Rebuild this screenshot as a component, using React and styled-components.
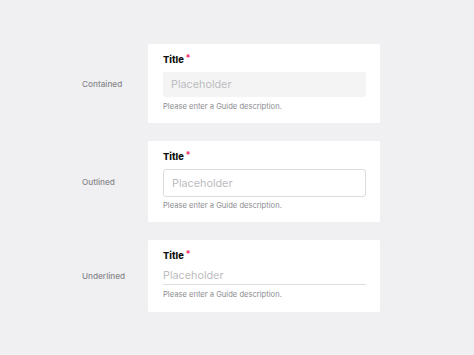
import React from "react";
import styled, { createGlobalStyle, css } from "styled-components";

const Global = createGlobalStyle`
  html, body { margin: 0; padding: 0; background: #f0f0f2; }
  body { font-family: Inter, "Noto Sans", "Liberation Sans", sans-serif; }
  * { box-sizing: border-box; }
`;

const Page = styled.div`
  width: 474px;
  height: 355px;
  padding: 44px 0 0 82px;
  display: flex;
  flex-direction: column;
  gap: 18px;
`;

const Row = styled.div`
  display: grid;
  grid-template-columns: 66px 232px;
  align-items: center;
`;

const Label = styled.div`
  font-size: 8.2px;
  font-weight: 500;
  color: #88888c;
  line-height: 12px;
`;

const Card = styled.div`
  background: #fff;
  border-radius: 2px;
  padding: 10px 14px ${(p) => (p.$variant === "underlined" ? 12 : 11)}px 15px;
  display: flex;
  flex-direction: column;
`;

const Title = styled.div`
  font-size: 9.4px;
  font-weight: 800;
  color: #111;
  line-height: 12px;
  display: flex;
  align-items: flex-start;
`;

const Star = styled.span`
  color: #f2386e;
  font-size: 9px;
  line-height: 9px;
  margin-left: 1.5px;
  margin-top: -1px;
`;

const Input = styled.div`
  margin-top: ${(p) => (p.$variant === "underlined" ? 4 : 6)}px;
  display: flex;
  align-items: center;
  font-size: 10.8px;
  color: #bcbcbf;
  ${(p) =>
    p.$variant === "contained" &&
    css`
      height: 25px;
      padding-left: 8px;
      background: #f4f4f5;
      border-radius: 2px;
    `}
  ${(p) =>
    p.$variant === "outlined" &&
    css`
      height: 28px;
      padding-left: 8px;
      border: 1px solid #dcdcdf;
      border-radius: 3px;
    `}
  ${(p) =>
    p.$variant === "underlined" &&
    css`
      height: 19px;
      padding-left: 0;
      border-bottom: 1px solid #dedee1;
    `}
`;

const Help = styled.div`
  margin-top: ${(p) => (p.$variant === "outlined" ? 4 : 5)}px;
  font-size: 7.6px;
  line-height: 10px;
  color: #8c8c90;
`;

const rows = [
  { label: "Contained", variant: "contained" },
  { label: "Outlined", variant: "outlined" },
  { label: "Underlined", variant: "underlined" },
];

export default function App() {
  return (
    <>
      <Global />
      <Page>
        {rows.map((r) => (
          <Row key={r.variant}>
            <Label>{r.label}</Label>
            <Card $variant={r.variant}>
              <Title>
                Title<Star>*</Star>
              </Title>
              <Input $variant={r.variant}>Placeholder</Input>
              <Help $variant={r.variant}>Please enter a Guide description.</Help>
            </Card>
          </Row>
        ))}
      </Page>
    </>
  );
}
